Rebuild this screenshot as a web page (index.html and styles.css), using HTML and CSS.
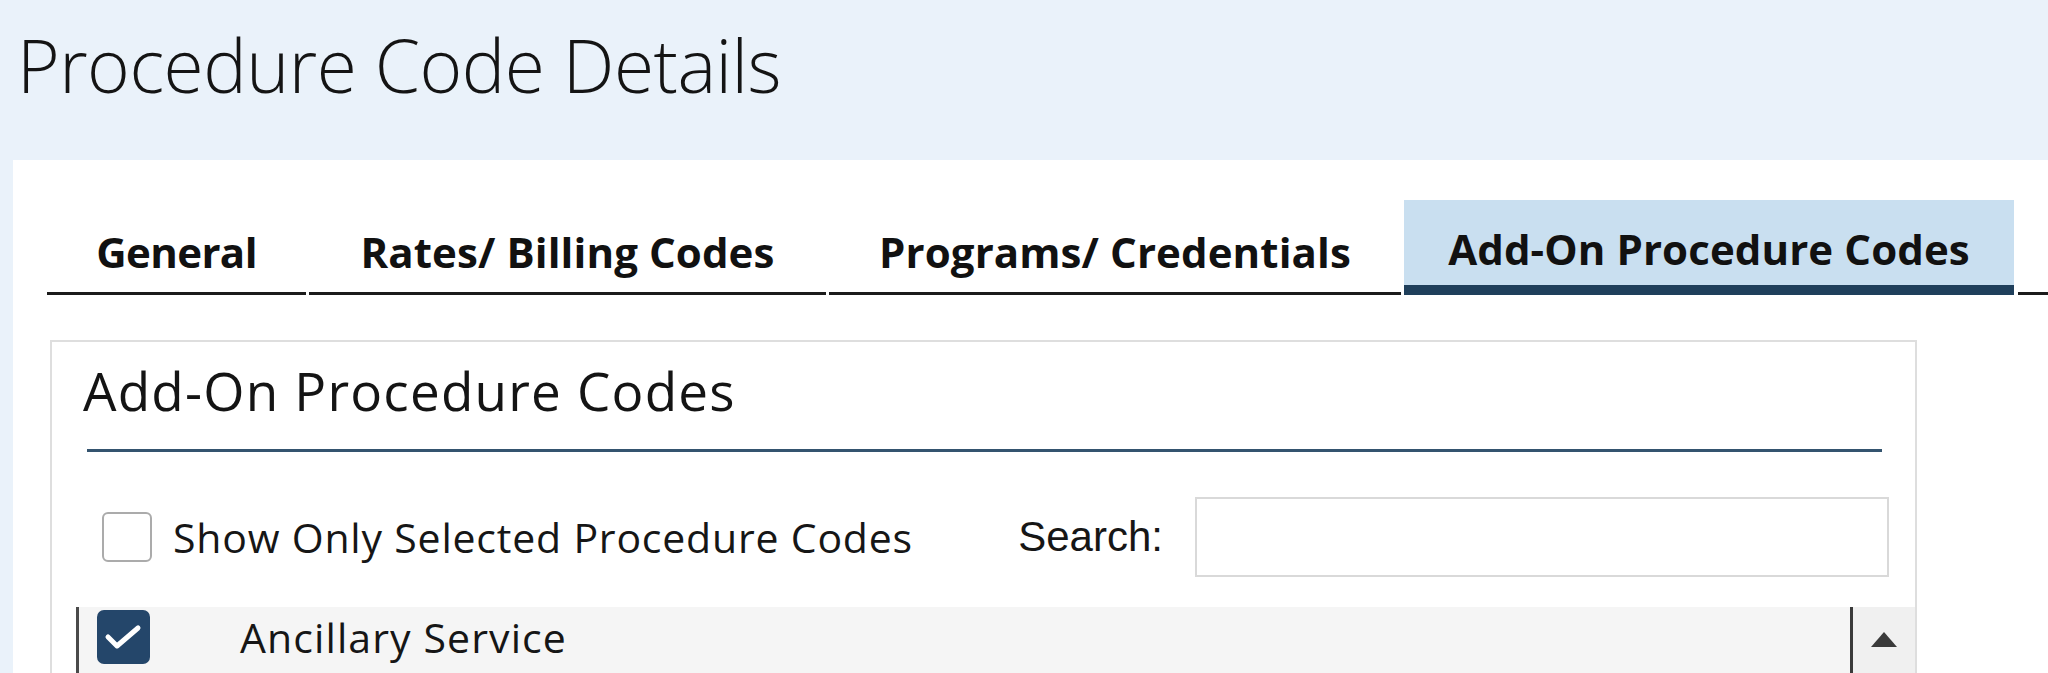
FILE: index.html
```html
<!DOCTYPE html>
<html lang="en">
<head>
<meta charset="utf-8">
<title>Procedure Code Details</title>
<link rel="stylesheet" href="styles.css">
</head>
<body>
<header class="page-header">
  <h1 class="page-title">Procedure Code Details</h1>
</header>
<main class="panel">
  <nav class="tabs">
    <div class="tab tab-general">General</div>
    <div class="tab tab-rates">Rates/ Billing Codes</div>
    <div class="tab tab-programs">Programs/ Credentials</div>
    <div class="tab tab-addon active">Add-On Procedure Codes</div>
    <div class="tab-fill"></div>
  </nav>
  <section class="box">
    <h2 class="box-title">Add-On Procedure Codes</h2>
    <div class="filter-row">
      <label class="check-label"><span class="checkbox"></span><span class="check-text">Show Only Selected Procedure Codes</span></label>
      <label class="search-label" for="search">Search:</label>
      <input id="search" class="search-input" type="text">
    </div>
    <div class="grid">
      <div class="grid-body">
        <div class="grid-row">
          <span class="checkbox checked"><svg viewBox="0 0 52 52" width="52" height="52"><polyline points="11,27 20,36 41,18" fill="none" stroke="#ffffff" stroke-width="5" stroke-linecap="round" stroke-linejoin="round"/></svg></span>
          <span class="cell-text">Ancillary Service</span>
        </div>
      </div>
      <div class="scrollbar"><span class="arrow-up"></span></div>
    </div>
  </section>
</main>
</body>
</html>
```
FILE: styles.css
```css
html, body {
  margin: 0;
  padding: 0;
  height: 673px;
  overflow: hidden;
}
body {
  background: #eaf2fa;
  font-family: "Open Sans", "Noto Sans", sans-serif;
  color: #161616;
}
.page-header {
  box-sizing: border-box;
  height: 160px;
  padding: 28px 0 0 17px;
}
.page-title {
  margin: 0;
  font-weight: 300;
  font-size: 73px;
  line-height: 73px;
  letter-spacing: -0.5px;
  color: #141414;
}
.panel {
  margin-left: 13px;
  background: #ffffff;
  height: 513px;
  padding-top: 40px;
  box-sizing: border-box;
}
.tabs {
  display: flex;
  align-items: flex-end;
  gap: 3px;
  margin-left: 34px;
}
.tab {
  box-sizing: border-box;
  height: 95px;
  padding-top: 30px;
  text-align: center;
  font-weight: 700;
  font-size: 42px;
  line-height: 43px;
  letter-spacing: 0.1px;
  border-bottom: 3px solid #1b1b1b;
  color: #111;
  white-space: nowrap;
}
.tab-general { width: 259px; letter-spacing: -0.6px; }
.tab-rates { width: 517px; }
.tab-programs { width: 572px; }
.tab-addon { width: 610px; }
.tab.active {
  background: #c9dff0;
  border-bottom: 10px solid #1f3f5b;
  padding-top: 27px;
}
.tab-fill {
  flex: 1;
  height: 95px;
  box-sizing: border-box;
  border-bottom: 3px solid #1b1b1b;
  margin-left: 1px;
}
.box {
  box-sizing: border-box;
  width: 1867px;
  margin: 45px 0 0 37px;
  border: 2px solid #dedede;
  border-bottom: none;
  height: 340px;
}
.box-title {
  margin: 17px 33px 0 35px;
  padding-bottom: 26px;
  font-weight: 400;
  font-size: 53px;
  line-height: 64px;
  letter-spacing: 1.2px;
  text-indent: -4px;
  border-bottom: 3px solid #34546f;
  color: #141414;
}
.filter-row {
  display: flex;
  align-items: center;
  height: 80px;
  margin-top: 45px;
  padding-left: 50px;
  padding-right: 26px;
}
.check-label {
  flex: 1;
  display: flex;
  align-items: center;
}
.checkbox {
  box-sizing: border-box;
  width: 50px;
  height: 50px;
  border: 2px solid #ababab;
  border-radius: 6px;
  background: #ffffff;
  flex: none;
}
.check-text {
  margin-left: 21px;
  font-size: 41px;
  letter-spacing: 0.8px;
  color: #161616;
}
.search-label {
  font-family: "Liberation Sans", Arial, sans-serif;
  font-size: 42px;
  margin-right: 32px;
  color: #161616;
}
.search-input {
  box-sizing: border-box;
  width: 694px;
  height: 80px;
  border: 2px solid #d9d9d9;
  background: #fff;
  margin: 0;
  padding: 0 10px;
  outline: none;
}
.grid {
  display: flex;
  margin: 30px 0 0 24px;
  height: 140px;
  border-left: 3px solid #4a4a4a;
}
.grid-body {
  flex: 1;
  background: #f5f5f5;
}
.grid-row {
  display: flex;
  align-items: center;
  height: 60px;
  padding-left: 18px;
}
.checkbox.checked {
  width: 53px;
  height: 54px;
  border: none;
  background: #24466a;
  border-radius: 7px;
}
.checkbox.checked svg {
  display: block;
}
.cell-text {
  margin-left: 90px;
  font-size: 41px;
  letter-spacing: 1.1px;
  color: #161616;
}
.scrollbar {
  width: 62px;
  flex: none;
  background: #f0f0f0;
  border-left: 3px solid #3a3a3a;
}
.arrow-up {
  display: block;
  width: 0;
  height: 0;
  margin: 25px auto 0;
  border-left: 13px solid transparent;
  border-right: 13px solid transparent;
  border-bottom: 15px solid #3a3a3a;
}
```
